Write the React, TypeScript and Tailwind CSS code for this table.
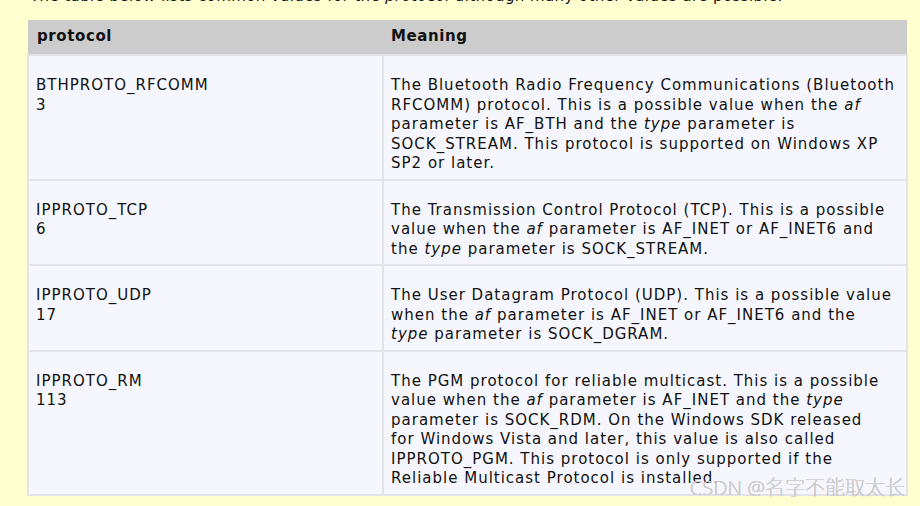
import React from 'react';

type Row = {
  name: string;
  value: string;
  meaning: React.ReactNode;
};

// line breaks follow the reference wrapping
const rows: Row[] = [
  {
    name: 'BTHPROTO_RFCOMM',
    value: '3',
    meaning: (
      <>
        The Bluetooth Radio Frequency Communications (Bluetooth
        <br />
        RFCOMM) protocol. This is a possible value when the <i>af</i>
        <br />
        parameter is AF_BTH and the <i>type</i> parameter is
        <br />
        SOCK_STREAM. This protocol is supported on Windows XP
        <br />
        SP2 or later.
      </>
    ),
  },
  {
    name: 'IPPROTO_TCP',
    value: '6',
    meaning: (
      <>
        The Transmission Control Protocol (TCP). This is a possible
        <br />
        value when the <i>af</i> parameter is AF_INET or AF_INET6 and
        <br />
        the <i>type</i> parameter is SOCK_STREAM.
      </>
    ),
  },
  {
    name: 'IPPROTO_UDP',
    value: '17',
    meaning: (
      <>
        The User Datagram Protocol (UDP). This is a possible value
        <br />
        when the <i>af</i> parameter is AF_INET or AF_INET6 and the
        <br />
        <i>type</i> parameter is SOCK_DGRAM.
      </>
    ),
  },
  {
    name: 'IPPROTO_RM',
    value: '113',
    meaning: (
      <>
        The PGM protocol for reliable multicast. This is a possible
        <br />
        value when the <i>af</i> parameter is AF_INET and the <i>type</i>
        <br />
        parameter is SOCK_RDM. On the Windows SDK released
        <br />
        for Windows Vista and later, this value is also called
        <br />
        IPPROTO_PGM. This protocol is only supported if the
        <br />
        Reliable Multicast Protocol is installed.
      </>
    ),
  },
];

export default function App() {
  return (
    <div className="relative w-[920px] h-[506px] overflow-hidden bg-[#ffffd0] text-[#111111] font-['DejaVu_Sans',Verdana,sans-serif] text-[15px] leading-[19.5px] tracking-[1px]">
      <p className="pl-[30px] -mt-[13px] h-[33px] whitespace-nowrap tracking-[0.4px]">
        The table below lists common values for the <i>protocol</i> although many other values are possible.
      </p>

      <table className="ml-[27px] w-[881px] table-fixed border-collapse">
        <colgroup>
          <col className="w-[355px]" />
          <col />
        </colgroup>
        <thead>
          <tr className="bg-[#cccccc] h-[35px]">
            <th className="text-left font-bold px-[9px] align-middle tracking-[0.6px]">protocol</th>
            <th className="text-left font-bold px-[8px] align-middle tracking-[0.6px]">Meaning</th>
          </tr>
        </thead>
        <tbody>
          {rows.map((r) => (
            <tr key={r.name} className="bg-[#f6f7fe]">
              <td className="align-top border-2 border-[#e3e3ea] px-[7px] pt-[20px] pb-[5px] whitespace-nowrap">
                <div>{r.name}</div>
                <div>{r.value}</div>
              </td>
              <td className="align-top border-2 border-[#e3e3ea] px-[7px] pt-[20px] pb-[5px] whitespace-nowrap">
                {r.meaning}
              </td>
            </tr>
          ))}
        </tbody>
      </table>

      <div className="absolute right-[15px] bottom-[7px] text-[20px] leading-[22px] tracking-normal font-light text-[#d4d4d4] font-['Noto_Sans','Noto_Sans_CJK_SC',sans-serif] [text-shadow:0_0_0.5px_#9a9a9a]">
        CSDN @名字不能取太长
      </div>
    </div>
  );
}
